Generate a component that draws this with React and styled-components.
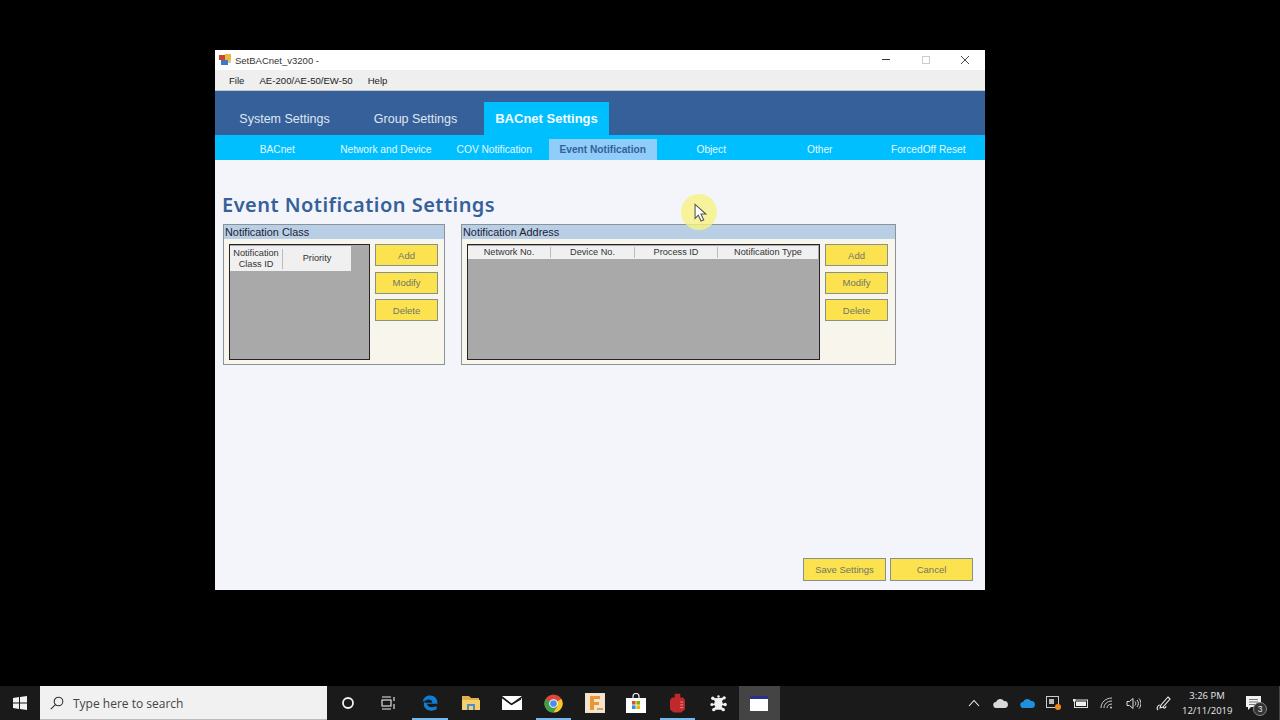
import React from 'react';
import styled, { createGlobalStyle } from 'styled-components';

const GlobalStyle = createGlobalStyle`
	html, body {
		margin: 0;
		padding: 0;
		background: #000;
		overflow: hidden;
	}
	* {
		box-sizing: border-box;
	}
`;

const Screen = styled.div`
	width: 1280px;
	height: 720px;
	display: flex;
	flex-direction: column;
	background: #000;
	font-family: 'Liberation Sans', Arial, sans-serif;
`;

const Desktop = styled.div`
	flex: 1;
	padding: 50px 0 0 215px;
`;

const Window = styled.div`
	position: relative;
	width: 770px;
	height: 540px;
	display: flex;
	flex-direction: column;
	background: #f3f5fa;
`;

const TitleBar = styled.div`
	height: 20px;
	display: flex;
	align-items: center;
	background: #fff;
	padding-left: 4px;
	font-size: 9.5px;
	color: #333;
`;

const TitleText = styled.span`
	margin-left: 4px;
`;

const WinControls = styled.div`
	margin-left: auto;
	display: flex;
`;

const WinControl = styled.div`
	width: 39.5px;
	height: 20px;
	display: flex;
	align-items: center;
	justify-content: center;
`;

const MenuBar = styled.div`
	height: 21px;
	display: flex;
	align-items: center;
	gap: 15px;
	padding: 0 0 0 14px;
	background: #efefef;
	border-bottom: 1px solid #c4c6c8;
	font-size: 9.6px;
	color: #222;
`;

const TabBar = styled.div`
	height: 44px;
	display: flex;
	align-items: flex-end;
	gap: 6px;
	padding-left: 7px;
	background: #36609a;
`;

const Tab = styled.div`
	width: 125px;
	height: 33px;
	display: flex;
	align-items: center;
	justify-content: center;
	font-size: ${(p) => (p.$active ? 13 : 12.5)}px;
	font-weight: ${(p) => (p.$active ? 700 : 400)};
	color: ${(p) => (p.$active ? '#f2fbff' : '#dfe7f1')};
	background: ${(p) => (p.$active ? '#00bfff' : 'transparent')};
`;

const SubBar = styled.div`
	height: 25px;
	display: flex;
	align-items: flex-end;
	padding-left: 8px;
	background: #00bfff;
`;

const SubTab = styled.div`
	width: 108.5px;
	height: 21px;
	display: flex;
	align-items: center;
	justify-content: center;
	font-size: 10.2px;
	font-weight: ${(p) => (p.$active ? 700 : 400)};
	color: ${(p) => (p.$active ? '#36609a' : '#e4f7ff')};
	background: ${(p) => (p.$active ? '#8fcdfb' : 'transparent')};
`;

const Content = styled.div`
	flex: 1;
	display: flex;
	flex-direction: column;
	padding: 31px 12px 9px 8px;
`;

const Heading = styled.h1`
	margin: 0 0 5px -1px;
	height: 28px;
	line-height: 28px;
	font-family: 'Noto Sans', sans-serif;
	font-size: 20px;
	font-weight: 600;
	letter-spacing: 0.47px;
	color: #36609a;
`;

const Groups = styled.div`
	display: flex;
	gap: 16px;
`;

const Group = styled.div`
	width: ${(p) => p.$width}px;
	height: 141px;
	display: flex;
	flex-direction: column;
	border: 1px solid #8c9296;
	background: #f8f6ec;
`;

const GroupTitle = styled.div`
	height: 14px;
	line-height: 14px;
	padding-left: 1px;
	background: #b8cfe6;
	font-size: 10.9px;
	color: #223;
`;

const GroupBody = styled.div`
	flex: 1;
	display: flex;
	gap: 5px;
	padding: 5px 0 0 5px;
`;

const Grid = styled.div`
	flex-shrink: 0;
	width: ${(p) => p.$width}px;
	height: 116px;
	background: #a9a9a9;
	border: 1.5px solid #24242a;
	padding-top: 1px;
`;

const GridHeader = styled.div`
	display: flex;
	width: ${(p) => p.$width}px;
	height: ${(p) => p.$height}px;
	align-items: center;
	background: #f0f0f0;
	font-size: 9.2px;
	line-height: 11px;
	color: #333;
`;

const GridCol = styled.div`
	width: ${(p) => p.$width}px;
	height: 80%;
	display: flex;
	align-items: center;
	justify-content: center;
	text-align: center;
	border-right: ${(p) => (p.$last ? 'none' : '1px solid #bbb')};
`;

const Buttons = styled.div`
	display: flex;
	flex-direction: column;
	gap: 5.5px;
`;

const YellowButton = styled.div`
	width: ${(p) => p.$width || 63}px;
	height: ${(p) => p.$height || 22}px;
	display: flex;
	align-items: center;
	justify-content: center;
	background: #fde24f;
	border: 1px solid #83938c;
	font-size: 9.5px;
	color: #6f7568;
`;

const Footer = styled.div`
	margin-top: auto;
	display: flex;
	justify-content: flex-end;
	gap: 4px;
`;

const Cursor = styled.div`
	position: absolute;
	left: 466px;
	top: 144px;
	width: 36px;
	height: 36px;
	border-radius: 50%;
	background: rgba(246, 243, 130, 0.8);
`;

const CursorArrow = styled.svg`
	position: absolute;
	left: 13px;
	top: 9px;
`;

const Taskbar = styled.div`
	height: 34px;
	display: flex;
	align-items: stretch;
	background: #1a1a1a;
`;

const StartBtn = styled.div`
	width: 40px;
	display: flex;
	align-items: center;
	justify-content: center;
`;

const SearchBox = styled.div`
	width: 287px;
	display: flex;
	align-items: center;
	gap: 9px;
	padding: 1px 0 0 10px;
	background: #f1f1f1;
	border-bottom: 1px solid #bbb;
	font-family: 'Open Sans', sans-serif;
	font-size: 12px;
	color: #444;
`;

const TaskItem = styled.div`
	position: relative;
	width: 41.2px;
	display: flex;
	align-items: center;
	justify-content: center;
	background: ${(p) => (p.$active ? '#444' : 'transparent')};
`;

const OpenMark = styled.span`
	position: absolute;
	left: 3px;
	right: 3px;
	bottom: 0;
	height: 2px;
	background: #76b9ed;
`;

const Tray = styled.div`
	margin-left: auto;
	display: flex;
	align-items: center;
`;

const TrayIcon = styled.div`
	width: ${(p) => p.$width || 26.6}px;
	height: 34px;
	display: flex;
	align-items: center;
	justify-content: center;
`;

const Clock = styled.div`
	width: 50px;
	margin-left: 3px;
	text-align: center;
	white-space: nowrap;
	font-family: 'Open Sans', sans-serif;
	font-size: 9.5px;
	line-height: 15px;
	color: #e8e8e8;
`;

const NotifyWrap = styled.div`
	position: relative;
	width: 48px;
	height: 34px;
	display: flex;
	align-items: center;
	justify-content: center;
	padding-right: 4px;
	border-right: 1px solid #444;
`;

const NotifyBadge = styled.span`
	position: absolute;
	left: 21px;
	top: 16px;
	width: 14px;
	height: 14px;
	border-radius: 50%;
	background: #333;
	border: 1px solid #888;
	display: flex;
	align-items: center;
	justify-content: center;
	font-size: 8.5px;
	color: #eee;
`;

const AppIcon = () => (
	<svg width="12" height="12" viewBox="0 0 12 12">
		<rect x="0" y="1" width="6" height="5" fill="#c8452e" />
		<rect x="6" y="0" width="6" height="6" fill="#e8b93c" />
		<rect x="2" y="6" width="7" height="5" fill="#3f78c9" />
		<rect x="9" y="6" width="3" height="3" fill="#d9c98a" />
	</svg>
);

const MinIcon = () => (
	<svg width="10" height="10" viewBox="0 0 10 10">
		<path d="M1 4.500h8" stroke="#333" strokeWidth="1" />
	</svg>
);

const MaxIcon = () => (
	<svg width="10" height="10" viewBox="0 0 10 10">
		<rect x="1.500" y="1.500" width="7" height="7" fill="none" stroke="#ccc" />
	</svg>
);

const CloseIcon = () => (
	<svg width="10" height="10" viewBox="0 0 10 10">
		<path d="M1 1l8 8M9 1l-8 8" stroke="#333" strokeWidth="0.9" />
	</svg>
);

const WinLogo = () => (
	<svg width="14" height="14" viewBox="0 0 14 14" fill="#f2f2f2">
		<path d="M0 2l6-.9V6.600H0zM7 1l7-1v6.600H7zM0 7.400h6v5.500L0 12zM7 7.400h7V14l-7-1z" />
	</svg>
);

const SearchIcon = () => (
	<svg width="14" height="14" viewBox="0 0 14 14" fill="none" stroke="#333" strokeWidth="1.1">
		<circle cx="8.500" cy="5.500" r="4.300" />
		<path d="M5.400 8.600L.8 13.200" />
	</svg>
);

const CortanaIcon = () => (
	<svg width="14" height="14" viewBox="0 0 14 14" fill="none">
		<circle cx="7" cy="7" r="5" stroke="#f2f2f2" strokeWidth="1.800" />
	</svg>
);

const TaskViewIcon = () => (
	<svg width="15" height="14" viewBox="0 0 15 14" fill="none" stroke="#eee" strokeWidth="1.100">
		<path d="M1 1h9M1 13h9" />
		<rect x="1" y="4" width="9" height="6" />
		<path d="M13 1v4M13 8v5" />
	</svg>
);

const EdgeIcon = () => (
	<svg width="18" height="18" viewBox="0 0 18 18" fill="none">
		<path
			d="M1.500 9C2 4 5 1.500 9 1.500c4.500 0 7.500 3 7.500 8.300H6c.2 3.500 5 4.700 9.500 2.200v3.600c-6 2.500-12.500.4-12.700-5 0-2.200 1-4 3-5.200-1.700 1.800-1.900 2.600-2.100 3.300h7.500c0-4-5.500-4.500-9.700-.7z"
			fill="#0f7fd6"
		/>
	</svg>
);

const FolderIcon = () => (
	<svg width="18" height="16" viewBox="0 0 18 16">
		<path d="M0 1h7l2 2h8v3H0z" fill="#e2b04a" />
		<rect x="0" y="5" width="18" height="10" fill="#f4cf6b" />
		<rect x="5" y="9" width="8" height="6" fill="#4d8fc4" />
		<rect x="7" y="11" width="4" height="4" fill="#f4cf6b" />
	</svg>
);

const MailIcon = () => (
	<svg width="20" height="14" viewBox="0 0 20 14">
		<path d="M0 2v12h20V2L9.500 9z" fill="#fff" />
		<path d="M0 0h20L9.500 7.500z" fill="#fff" />
		<path d="M0 1.500L9.500 8.500 19 3" fill="none" stroke="#1a1a1a" strokeWidth="1.200" />
	</svg>
);

const ChromeIcon = () => (
	<svg width="19" height="19" viewBox="0 0 48 48">
		<circle cx="24" cy="24" r="23" fill="#e0453a" />
		<path d="M24 24L4 12.500A23 23 0 0 0 24 47l10-12z" fill="#3ea04f" />
		<path d="M24 24L44 12.500A23 23 0 0 1 24 47l10-17z" fill="#f5c927" />
		<circle cx="24" cy="24" r="11" fill="#fff" />
		<circle cx="24" cy="24" r="8.500" fill="#4c8bf0" />
	</svg>
);

const FusionIcon = () => (
	<svg width="20" height="20" viewBox="0 0 20 20">
		<rect width="20" height="20" fill="#f7e3c8" stroke="#ddd" />
		<path d="M5 3h10v3H9v3h5v3H9v5H5z" fill="#e8963a" />
		<rect x="12" y="15" width="6" height="2" fill="#c9a678" />
	</svg>
);

const StoreIcon = () => (
	<svg width="20" height="20" viewBox="0 0 20 20">
		<path d="M7 6V3.500a3 3 0 0 1 6 0V6" fill="none" stroke="#eee" strokeWidth="1.200" />
		<rect x="0" y="5" width="20" height="15" fill="#fff" />
		<rect x="6" y="8" width="3.600" height="3.600" fill="#e2502a" />
		<rect x="10.400" y="8" width="3.600" height="3.600" fill="#7db500" />
		<rect x="6" y="12.400" width="3.600" height="3.600" fill="#1f9be0" />
		<rect x="10.400" y="12.400" width="3.600" height="3.600" fill="#f5b400" />
	</svg>
);

const RedAppIcon = () => (
	<svg width="15" height="20" viewBox="0 0 16 20">
		<path d="M5 0h6v4h3l2 3v10l-4 3H4l-4-3V7l2-3h3z" fill="#c0282b" />
		<path d="M11 9h3M11 12h3M11 15h3" stroke="#e59a9a" strokeWidth="1" />
	</svg>
);

const SplatIcon = () => (
	<svg width="17" height="17" viewBox="0 0 18 18" fill="#f0f0f0">
		<circle cx="9" cy="9" r="4.500" />
		<circle cx="3" cy="3.500" r="1.800" />
		<circle cx="15" cy="3" r="1.800" />
		<circle cx="2" cy="10" r="1.600" />
		<circle cx="16" cy="10" r="1.800" />
		<circle cx="4" cy="15.500" r="1.800" />
		<circle cx="14" cy="15.500" r="1.800" />
		<circle cx="9" cy="1.500" r="1.300" />
		<path d="M3 3.500l6 5.500 6-6M2 10h14M4 15.500L9 9l5 6.500" stroke="#f0f0f0" strokeWidth="1.500" />
	</svg>
);

const WindowIcon = () => (
	<svg width="18" height="15" viewBox="0 0 18 15">
		<rect width="18" height="15" fill="#fff" />
		<rect width="18" height="3" fill="#2b2f8f" />
	</svg>
);

const ChevronIcon = () => (
	<svg width="12" height="8" viewBox="0 0 12 8" fill="none" stroke="#eee" strokeWidth="1.100">
		<path d="M1 7l5-5.500L11 7" />
	</svg>
);

const CloudIcon = ({ color }) => (
	<svg width="15" height="10" viewBox="0 0 15 10" fill={color}>
		<path d="M3.500 10a3 3 0 0 1-.5-6A4.500 4.500 0 0 1 11 3a3.500 3.500 0 0 1 .8 7z" />
	</svg>
);

const MeterIcon = () => (
	<svg width="15" height="14" viewBox="0 0 15 14" fill="none">
		<rect x=".5" y=".5" width="12" height="11" stroke="#ccc" />
		<rect x="3" y="3" width="5" height="5" fill="#bbb" />
		<circle cx="12" cy="11" r="3" fill="#f08a1d" />
	</svg>
);

const BatteryIcon = () => (
	<svg width="15" height="9" viewBox="0 0 15 9" fill="none">
		<rect x="1.500" y="1" width="13" height="7.500" stroke="#ddd" />
		<rect x="3" y="2.500" width="10" height="4.500" fill="#eee" />
		<rect x="0" y="0" width="2.500" height="2.500" fill="#eee" />
	</svg>
);

const WifiIcon = () => (
	<svg width="14" height="12" viewBox="0 0 14 12" fill="none" stroke="#ccc" strokeWidth="1">
		<path d="M1 11C1 5.500 5.500 1 12 1M4 11c0-3.800 3-7 8-7M7 11c0-2 1.700-4 5-4" />
		<circle cx="11" cy="10.500" r="1" fill="#ccc" stroke="none" />
	</svg>
);

const VolumeIcon = () => (
	<svg width="15" height="13" viewBox="0 0 15 13" fill="none" stroke="#ddd" strokeWidth="1">
		<path d="M1 4.500h2.500L7 1.500v10l-3.500-3H1z" />
		<path d="M9 4.500c1 1.200 1 2.800 0 4M11 3c1.800 2 1.800 5 0 7M13 1.500c2.500 3 2.500 7 0 10" />
	</svg>
);

const PenIcon = () => (
	<svg width="15" height="15" viewBox="0 0 15 15" fill="none" stroke="#e8e8e8" strokeWidth="1.100">
		<path d="M12 1l2 2-7 8-3 1 1-3z" />
		<path d="M2 14c-2-2 0-5 2-5M7 11c1 2 3 1 3-1" />
	</svg>
);

const ChatIcon = () => (
	<svg width="15" height="14" viewBox="0 0 15 14">
		<path d="M0 0h15v11H5l-3 3v-3H0z" fill="#f2f2f2" />
		<path d="M3 3.500h9M3 6h9M3 8.500h6" stroke="#555" strokeWidth="0.800" />
	</svg>
);

const ActionButtons = () => (
	<Buttons>
		<YellowButton>Add</YellowButton>
		<YellowButton>Modify</YellowButton>
		<YellowButton>Delete</YellowButton>
	</Buttons>
);

const App = () => {
	const topTabs = ['System Settings', 'Group Settings', 'BACnet Settings'];
	const subTabs = [
		'BACnet',
		'Network and Device',
		'COV Notification',
		'Event Notification',
		'Object',
		'Other',
		'ForcedOff Reset'
	];
	const addressCols = [
		['Network No.', 83],
		['Device No.', 84],
		['Process ID', 83],
		['Notification Type', 100]
	];

	return (
		<Screen>
			<GlobalStyle />
			<Desktop>
				<Window>
					<TitleBar>
						<AppIcon />
						<TitleText>SetBACnet_v3200 -</TitleText>
						<WinControls>
							<WinControl>
								<MinIcon />
							</WinControl>
							<WinControl>
								<MaxIcon />
							</WinControl>
							<WinControl>
								<CloseIcon />
							</WinControl>
						</WinControls>
					</TitleBar>
					<MenuBar>
						<span>File</span>
						<span>AE-200/AE-50/EW-50</span>
						<span>Help</span>
					</MenuBar>
					<TabBar>
						{topTabs.map((t, i) => (
							<Tab key={t} $active={i === 2}>
								{t}
							</Tab>
						))}
					</TabBar>
					<SubBar>
						{subTabs.map((t, i) => (
							<SubTab key={t} $active={i === 3}>
								{t}
							</SubTab>
						))}
					</SubBar>
					<Content>
						<Heading>Event Notification Settings</Heading>
						<Groups>
							<Group $width={222}>
								<GroupTitle>Notification Class</GroupTitle>
								<GroupBody>
									<Grid $width={141}>
										<GridHeader $width={121} $height={25}>
											<GridCol $width={53}>
												Notification
												<br />
												Class ID
											</GridCol>
											<GridCol $width={68} $last>
												Priority
											</GridCol>
										</GridHeader>
									</Grid>
									<ActionButtons />
								</GroupBody>
							</Group>
							<Group $width={435}>
								<GroupTitle>Notification Address</GroupTitle>
								<GroupBody>
									<Grid $width={353}>
										<GridHeader $width={350} $height={13}>
											{addressCols.map(([name, w], i) => (
												<GridCol key={name} $width={w} $last={i === 3}>
													{name}
												</GridCol>
											))}
										</GridHeader>
									</Grid>
									<ActionButtons />
								</GroupBody>
							</Group>
						</Groups>
						<Footer>
							<YellowButton $width={83} $height={23}>
								Save Settings
							</YellowButton>
							<YellowButton $width={83} $height={23}>
								Cancel
							</YellowButton>
						</Footer>
					</Content>
					<Cursor>
						<CursorArrow width="14" height="20" viewBox="0 0 13 18">
							<path
								d="M1 1v13l3-3 2.500 5.500 2.500-1L6.500 10H11z"
								fill="#fff"
								stroke="#555"
								strokeWidth="1"
							/>
						</CursorArrow>
					</Cursor>
				</Window>
			</Desktop>
			<Taskbar>
				<StartBtn>
					<WinLogo />
				</StartBtn>
				<SearchBox>
					<SearchIcon />
					Type here to search
				</SearchBox>
				<TaskItem>
					<CortanaIcon />
				</TaskItem>
				<TaskItem>
					<TaskViewIcon />
				</TaskItem>
				<TaskItem>
					<EdgeIcon />
					<OpenMark />
				</TaskItem>
				<TaskItem>
					<FolderIcon />
				</TaskItem>
				<TaskItem>
					<MailIcon />
				</TaskItem>
				<TaskItem>
					<ChromeIcon />
					<OpenMark />
				</TaskItem>
				<TaskItem>
					<FusionIcon />
				</TaskItem>
				<TaskItem>
					<StoreIcon />
				</TaskItem>
				<TaskItem>
					<RedAppIcon />
					<OpenMark />
				</TaskItem>
				<TaskItem>
					<SplatIcon />
				</TaskItem>
				<TaskItem $active>
					<WindowIcon />
				</TaskItem>
				<Tray>
					<TrayIcon>
						<ChevronIcon />
					</TrayIcon>
					<TrayIcon>
						<CloudIcon color="#d8d8d8" />
					</TrayIcon>
					<TrayIcon>
						<CloudIcon color="#1f8fdc" />
					</TrayIcon>
					<TrayIcon>
						<MeterIcon />
					</TrayIcon>
					<TrayIcon>
						<BatteryIcon />
					</TrayIcon>
					<TrayIcon>
						<WifiIcon />
					</TrayIcon>
					<TrayIcon>
						<VolumeIcon />
					</TrayIcon>
					<TrayIcon $width={32}>
						<PenIcon />
					</TrayIcon>
					<Clock>
						3:26 PM
						<br />
						12/11/2019
					</Clock>
					<NotifyWrap>
						<ChatIcon />
						<NotifyBadge>3</NotifyBadge>
					</NotifyWrap>
				</Tray>
			</Taskbar>
		</Screen>
	);
};

export default App;
